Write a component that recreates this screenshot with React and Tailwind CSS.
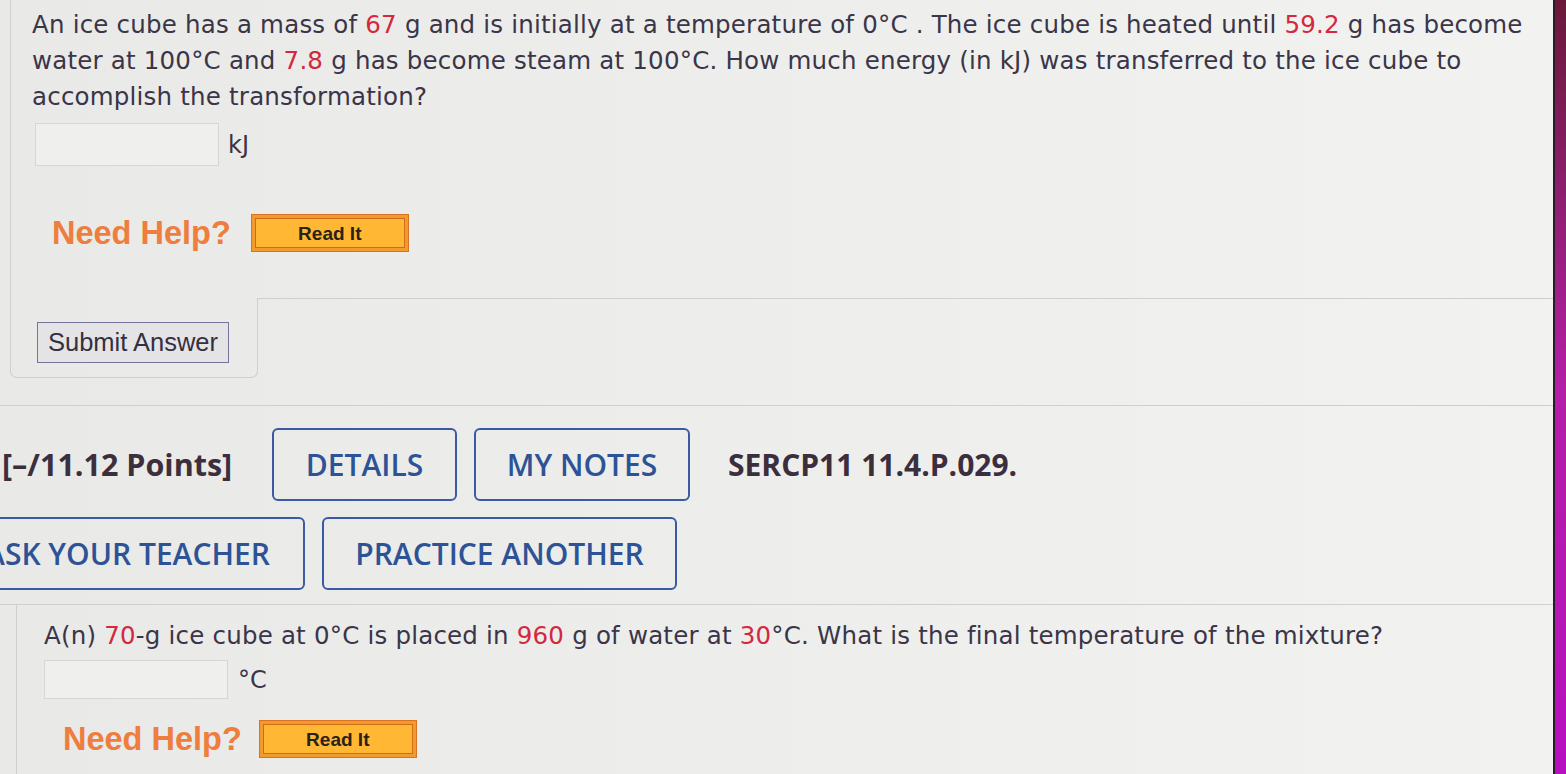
import React from "react";

const R = ({ children }) => <span className="text-[#d3283f]">{children}</span>;

const NeedHelp = ({ gap = "gap-[20px]" }) => (
  <div className={`flex items-center ${gap}`}>
    <span className="font-['Liberation_Sans',Arial,sans-serif] font-bold text-[32.5px] text-[#ee7d3e] leading-none">
      Need Help?
    </span>
    <button className="w-[158px] h-[38px] bg-[#f29a2e] border border-[#d9731f] p-[3px]">
      <div className="w-full h-full bg-[#ffb734] border border-[#cf6c1c] flex items-center justify-center font-['Liberation_Sans',Arial,sans-serif] font-bold text-[19px] text-[#2b2216] leading-none">
        Read It
      </div>
    </button>
  </div>
);

const OutlineBtn = ({ children, className = "" }) => (
  <button
    className={`shrink-0 h-[73px] flex items-center justify-center border-2 border-[#3a5ba3] rounded-[6px] font-['Open_Sans',sans-serif] font-semibold text-[30px] text-[#2d5396] ${className}`}
  >
    {children}
  </button>
);

export default function App() {
  return (
    <div className="w-[1566px] h-[774px] overflow-hidden flex bg-gradient-to-r from-[#e9e9e7] to-[#f2f2f0]">
      <main className="flex-1 flex flex-col min-w-0">
        {/* first question */}
        <div className="pl-[10px]">
          <div className="border-l border-[#cfcfd3] pl-[21px] pt-[7px] pb-[46px]">
            <p className="font-['DejaVu_Sans',Verdana,sans-serif] text-[24.5px] tracking-[0.2px] leading-[36px] text-[#3a3548] whitespace-nowrap">
              An ice cube has a mass of <R>67</R> g and is initially at a temperature of 0°C . The ice cube is heated until <R>59.2</R> g has become
              <br />
              water at 100°C and <R>7.8</R> g has become steam at 100°C. How much energy (in kJ) was transferred to the ice cube to
              <br />
              accomplish the transformation?
            </p>
            <div className="mt-[8px] flex items-center gap-[9px]">
              <div className="w-[184px] h-[43px] ml-[3px] border border-[#d6d6d8] bg-[#efefed]" />
              <span className="font-['DejaVu_Sans',Verdana,sans-serif] text-[24px] text-[#3a3548]">kJ</span>
            </div>
            <div className="mt-[48px] pl-[20px]">
              <NeedHelp />
            </div>
          </div>
          <div className="flex">
            <div className="w-[248px] h-[80px] shrink-0 border-l border-r border-b border-[#cfcfd3] rounded-b-[7px] pl-[26px] pt-[24px]">
              <button className="w-[192px] h-[41px] border-[1.5px] border-[#77739a] bg-[#e4e4e6] font-['Liberation_Sans',Arial,sans-serif] text-[25.5px] text-[#34303f] leading-none">
                Submit Answer
              </button>
            </div>
            <div className="flex-1 border-t border-[#cfcfd3]" />
          </div>
        </div>

        {/* header of second question */}
        <div className="mt-[27px] border-t border-b border-[#cfcfd3] pt-[22px] pb-[14px] flex flex-col gap-[16px]">
          <div className="flex items-center gap-[17px]">
            <span className="w-[255px] shrink-0 pl-[2px] font-['Open_Sans',sans-serif] font-bold text-[30.5px] text-[#3b2f3e] whitespace-nowrap">
              [–/11.12 Points]
            </span>
            <OutlineBtn className="w-[185px]">DETAILS</OutlineBtn>
            <OutlineBtn className="w-[216px]">MY NOTES</OutlineBtn>
            <span className="ml-[21px] font-['Open_Sans',sans-serif] font-bold text-[30px] text-[#3b2f3e] whitespace-nowrap">
              SERCP11 11.4.P.029.
            </span>
          </div>
          <div className="flex items-center gap-[17px] ml-[-50px]">
            <OutlineBtn className="w-[355px]">ASK YOUR TEACHER</OutlineBtn>
            <OutlineBtn className="w-[355px]">PRACTICE ANOTHER</OutlineBtn>
          </div>
        </div>

        {/* second question */}
        <div className="pl-[16px] flex-1">
          <div className="h-full border-l border-[#cfcfd3] pl-[27px] pt-[13px]">
            <p className="font-['DejaVu_Sans',Verdana,sans-serif] text-[24.5px] tracking-[0.2px] leading-[36px] text-[#3a3548] whitespace-nowrap">
              A(n) <R>70</R>-g ice cube at 0°C is placed in <R>960</R> g of water at <R>30</R>°C. What is the final temperature of the mixture?
            </p>
            <div className="mt-[6px] flex items-center gap-[10px]">
              <div className="w-[184px] h-[39px] border border-[#d6d6d8] bg-[#efefed]" />
              <span className="font-['DejaVu_Sans',Verdana,sans-serif] text-[24px] text-[#3a3548]">°C</span>
            </div>
            <div className="mt-[21px] pl-[19px]">
              <NeedHelp gap="gap-[17px]" />
            </div>
          </div>
        </div>
      </main>
      <aside className="w-[13px] shrink-0 border-l-2 border-[#2a1a2a] bg-gradient-to-b from-[#6a1838] via-[#b41ea8] to-[#b80fbf]" />
    </div>
  );
}
